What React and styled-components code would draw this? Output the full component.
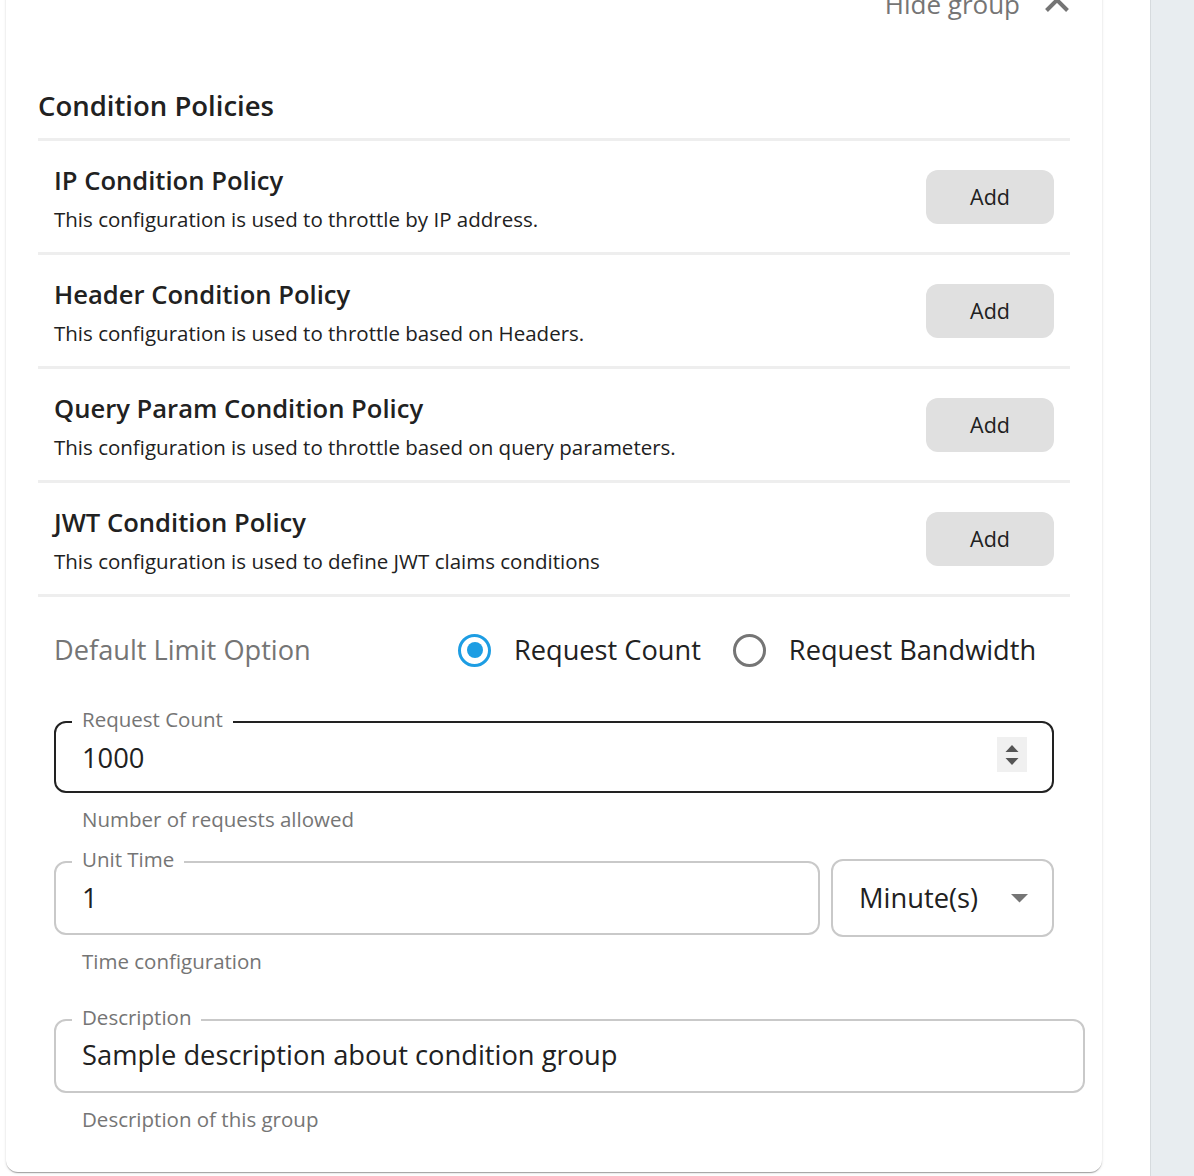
import React from "react";
import styled, { createGlobalStyle } from "styled-components";

const COLORS = {
  text: "#212121",
  muted: "#757575",
  divider: "#eeeeee",
  blue: "#1d9de3",
  outline: "#c9c9c9",
};

const POLICIES = [
  {
    title: "IP Condition Policy",
    text: "This configuration is used to throttle by IP address.",
  },
  {
    title: "Header Condition Policy",
    text: "This configuration is used to throttle based on Headers.",
  },
  {
    title: "Query Param Condition Policy",
    text: "This configuration is used to throttle based on query parameters.",
  },
  {
    title: "JWT Condition Policy",
    text: "This configuration is used to define JWT claims conditions",
  },
];

const GlobalStyle = createGlobalStyle`
  * { box-sizing: border-box; }
  html, body {
    margin: 0;
    padding: 0;
    background: #fff;
  }
  body {
    font-family: "Open Sans", "Noto Sans", sans-serif;
    color: ${COLORS.text};
    overflow: hidden;
  }
`;

const Radio = ({ checked, label }) => (
  <RadioOption>
    <RadioCircle $checked={checked}>{checked && <RadioDot />}</RadioCircle>
    <RadioText>{label}</RadioText>
  </RadioOption>
);

const OutlinedField = ({ label, value, focused, height, pb, children }) => (
  <Fieldset $focused={focused}>
    <Legend>{label}</Legend>
    <InputRow $height={height} $pb={pb}>
      <Value>{value}</Value>
      {children}
    </InputRow>
  </Fieldset>
);

const App = () => {
  return (
    <Page>
      <GlobalStyle />
      <Main>
        <Card>
          <Header>
            <HideText>Hide group</HideText>
            <Chevron viewBox="0 0 26 16" width="26" height="16">
              <polyline
                points="2.5,13.5 13,3 23.5,13.5"
                fill="none"
                stroke={COLORS.muted}
                strokeWidth="4"
              />
            </Chevron>
          </Header>

          <Title>Condition Policies</Title>
          <PolicyList>
            {POLICIES.map((policy) => (
              <PolicyRow key={policy.title}>
                <PolicyInfo>
                  <PolicyTitle>{policy.title}</PolicyTitle>
                  <PolicyText>{policy.text}</PolicyText>
                </PolicyInfo>
                <AddButton>Add</AddButton>
              </PolicyRow>
            ))}
          </PolicyList>

          <LimitRow>
            <LimitLabel>Default Limit Option</LimitLabel>
            <Radio checked label="Request Count" />
            <Radio label="Request Bandwidth" />
          </LimitRow>

          <FieldGroup $top={34}>
            <OutlinedField
              label="Request Count"
              value="1000"
              focused
              height={54}
              pb={13}
            >
              <Spinner>
                <svg width="14" height="26" viewBox="0 0 14 26">
                  <path d="M7 3 L13.5 10 L0.5 10 Z" fill="#555" />
                  <path d="M0.5 16 L13.5 16 L7 23 Z" fill="#555" />
                </svg>
              </Spinner>
            </OutlinedField>
            <Helper>Number of requests allowed</Helper>
          </FieldGroup>

          <FieldGroup $top={14}>
            <UnitRow>
              <OutlinedField label="Unit Time" value="1" height={56} pb={14} />
              <Select>
                <Value>Minute(s)</Value>
                <svg width="17" height="9" viewBox="0 0 17 9">
                  <path d="M0 0 L17 0 L8.5 8.5 Z" fill={COLORS.muted} />
                </svg>
              </Select>
            </UnitRow>
            <Helper>Time configuration</Helper>
          </FieldGroup>

          <FieldGroup $top={30} $wide>
            <OutlinedField
              label="Description"
              value="Sample description about condition group"
              height={56}
              pb={16}
            />
            <Helper>Description of this group</Helper>
          </FieldGroup>
        </Card>
      </Main>
      <SideStrip />
    </Page>
  );
};

const Page = styled.div`
  display: flex;
  min-height: 100vh;
`;

const Main = styled.div`
  flex: none;
  width: 1150px;
  padding: 0 48px 0 6px;
`;

const Card = styled.div`
  margin-top: -40px;
  padding: 24px 32px 39px;
  background: #fff;
  border-radius: 0 0 12px 12px;
  box-shadow: 0 2px 1px -1px rgba(0, 0, 0, 0.2), 0 1px 1px 0 rgba(0, 0, 0, 0.14),
    0 1px 3px 0 rgba(0, 0, 0, 0.12);
`;

const SideStrip = styled.div`
  flex: 1;
  background: #e8edf0;
  border-left: 1px solid #d6dbde;
`;

const Header = styled.div`
  display: flex;
  justify-content: flex-end;
  align-items: flex-start;
  height: 38px;
  gap: 24px;
`;

const HideText = styled.span`
  font-size: 26px;
  line-height: 38px;
  margin-top: 1px;
  color: ${COLORS.muted};
  white-space: nowrap;
`;

const Chevron = styled.svg`
  flex: none;
  margin-top: 13px;
`;

const Title = styled.div`
  margin-top: 65px;
  margin-bottom: 13px;
  font-size: 27.5px;
  line-height: 38px;
  font-weight: 600;
`;

const PolicyList = styled.div`
  border-bottom: 3px solid ${COLORS.divider};
`;

const PolicyRow = styled.div`
  display: flex;
  align-items: center;
  justify-content: space-between;
  height: 114px;
  padding: 0 16px;
  border-top: 3px solid ${COLORS.divider};
`;

const PolicyInfo = styled.div`
  padding-top: 3px;
`;

const PolicyTitle = styled.div`
  font-size: 25.6px;
  line-height: 34px;
  font-weight: 600;
`;

const PolicyText = styled.div`
  margin-top: 7px;
  font-size: 20.5px;
  line-height: 28px;
`;

const AddButton = styled.button`
  flex: none;
  width: 128px;
  height: 54px;
  border: none;
  border-radius: 12px;
  background: #e0e0e0;
  font-family: inherit;
  font-size: 21.5px;
  color: ${COLORS.text};
  cursor: pointer;
`;

const LimitRow = styled.div`
  display: flex;
  align-items: center;
  height: 76px;
  padding: 30px 16px 0;
  white-space: nowrap;
`;

const LimitLabel = styled.div`
  flex: none;
  width: 404px;
  font-size: 27.2px;
  line-height: 46px;
  color: ${COLORS.muted};
`;

const RadioOption = styled.label`
  flex: none;
  display: flex;
  align-items: center;
  gap: 23px;
  margin-right: 32px;
`;

const RadioCircle = styled.span`
  flex: none;
  display: flex;
  align-items: center;
  justify-content: center;
  width: 33px;
  height: 33px;
  border-radius: 50%;
  border: 3.5px solid ${(p) => (p.$checked ? COLORS.blue : COLORS.muted)};
`;

const RadioDot = styled.span`
  width: 16px;
  height: 16px;
  border-radius: 50%;
  background: ${COLORS.blue};
`;

const RadioText = styled.span`
  font-size: 27.2px;
  line-height: 46px;
`;

const FieldGroup = styled.div`
  margin-top: ${(p) => p.$top}px;
  padding: 0 16px;
  margin-right: ${(p) => (p.$wide ? "-31px" : "0")};
`;

const Fieldset = styled.fieldset`
  flex: 1;
  min-width: 0;
  margin: 0;
  padding: 0 16px;
  border: 2px solid ${(p) => (p.$focused ? "#222" : COLORS.outline)};
  border-radius: 12px;
`;

/* label sits a little above the notch line, as in the MUI outlined field */
const Legend = styled.legend`
  padding: 0 10px 6px;
  font-size: 20.5px;
  line-height: 24px;
  color: ${COLORS.muted};
`;

const InputRow = styled.div`
  display: flex;
  align-items: center;
  justify-content: space-between;
  height: ${(p) => p.$height}px;
  padding: 0 9px ${(p) => p.$pb}px 10px;
`;

const Value = styled.span`
  font-size: 27.3px;
  line-height: 38px;
  color: ${COLORS.text};
  white-space: nowrap;
`;

const Spinner = styled.span`
  display: flex;
  align-items: center;
  justify-content: center;
  width: 30px;
  height: 35px;
  margin-top: -6px;
  background: #f0f0f0;
`;

const Helper = styled.div`
  margin-top: 12px;
  padding-left: 28px;
  font-size: 20.5px;
  line-height: 28px;
  color: ${COLORS.muted};
`;

const UnitRow = styled.div`
  display: flex;
  align-items: flex-end;
  gap: 11px;
`;

const Select = styled.div`
  flex: none;
  display: flex;
  align-items: center;
  justify-content: space-between;
  width: 223px;
  height: 78px;
  margin-bottom: -2px;
  padding: 0 24px 0 26px;
  border: 2px solid ${COLORS.outline};
  border-radius: 12px;
`;

export default App;
